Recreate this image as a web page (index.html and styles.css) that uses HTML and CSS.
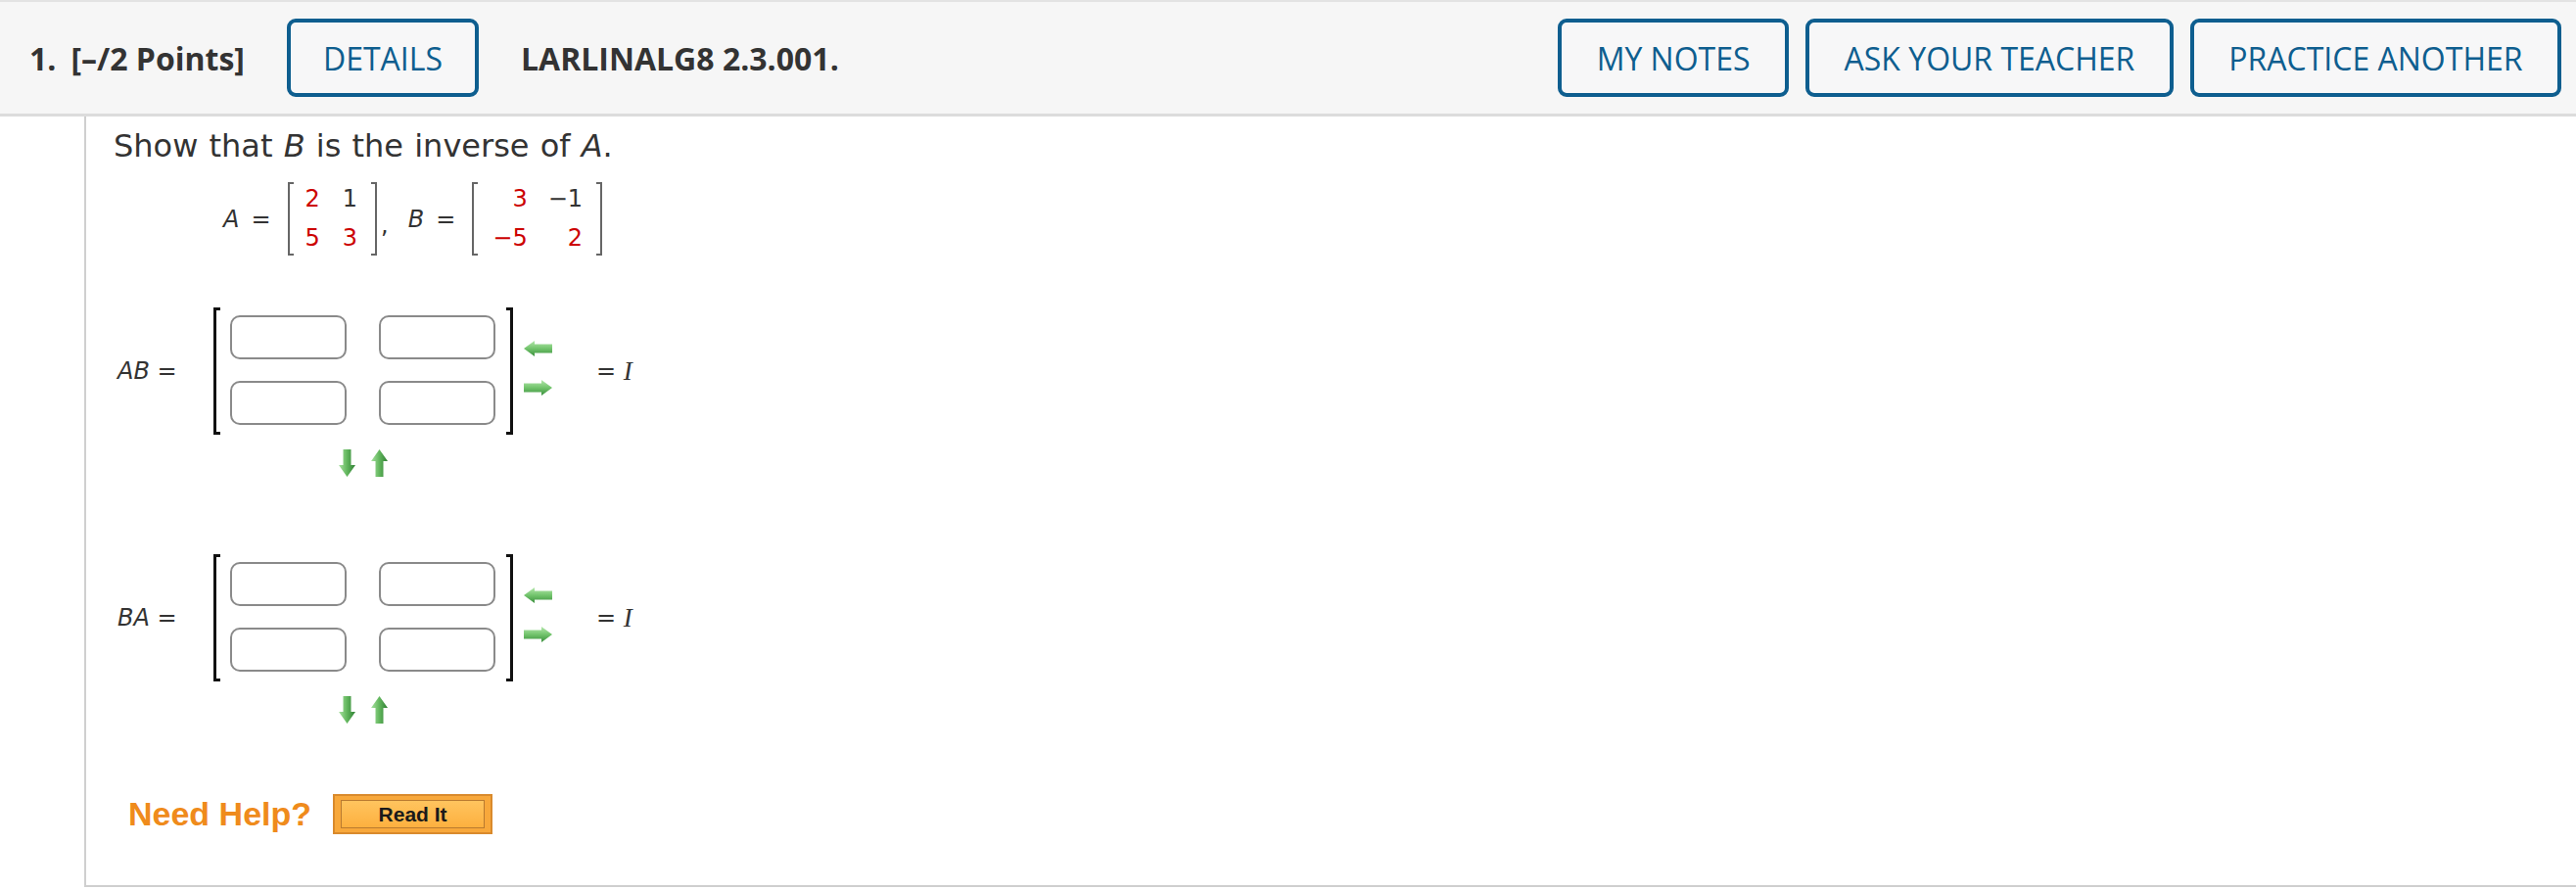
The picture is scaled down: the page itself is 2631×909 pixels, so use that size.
FILE: index.html
```html
<!DOCTYPE html>
<html>
<head>
<meta charset="utf-8">
<link rel="stylesheet" href="styles.css">
</head>
<body>
<svg class="defs" aria-hidden="true">
  <defs>
    <linearGradient id="gh" x1="0" y1="0" x2="0" y2="1">
      <stop offset="0" stop-color="#b5e8ad"/>
      <stop offset="0.5" stop-color="#72c46c"/>
      <stop offset="1" stop-color="#3a8f3d"/>
    </linearGradient>
    <linearGradient id="gv" x1="0" y1="0" x2="1" y2="0">
      <stop offset="0" stop-color="#a9e2a1"/>
      <stop offset="0.5" stop-color="#62b65d"/>
      <stop offset="1" stop-color="#2f7f33"/>
    </linearGradient>
  </defs>
</svg>

<div class="header">
  <span class="qnum">1.</span>
  <span class="points">[–/2 Points]</span>
  <button class="hbtn details">DETAILS</button>
  <span class="qid">LARLINALG8 2.3.001.</span>
  <div class="actions">
    <button class="hbtn wide">MY NOTES</button>
    <button class="hbtn wide">ASK YOUR TEACHER</button>
    <button class="hbtn wide">PRACTICE ANOTHER</button>
  </div>
</div>

<div class="content">
  <p class="prompt">Show that <i>B</i> is the inverse of <i>A</i>.</p>

  <div class="given">
    <span class="var">A</span><span class="eqs">=</span>
    <span class="smat">
      <span class="sbr l"></span>
      <span class="sgrid ga">
        <span class="red">2</span><span>1</span>
        <span class="red">5</span><span class="red">3</span>
      </span>
      <span class="sbr r"></span>
    </span>
    <span class="comma">,</span>
    <span class="var">B</span><span class="eqs">=</span>
    <span class="smat">
      <span class="sbr l"></span>
      <span class="sgrid gb">
        <span class="red">3</span><span>−1</span>
        <span class="red">−5</span><span class="red">2</span>
      </span>
      <span class="sbr r"></span>
    </span>
  </div>

  <div class="prod first">
    <span class="lbl"><i>AB</i>&nbsp;=</span>
    <div class="matcol">
      <div class="bigmat">
        <span class="bbr l"></span>
        <div class="bgrid">
          <span class="cell"></span><span class="cell"></span>
          <span class="cell"></span><span class="cell"></span>
        </div>
        <span class="bbr r"></span>
      </div>
      <div class="varrows">
        <svg width="17" height="28" viewBox="0 0 17 28"><polygon points="4.5,0 12.5,0 12.5,16 17,16 8.5,28 0,16 4.5,16" fill="url(#gv)"/></svg>
        <svg width="17" height="28" viewBox="0 0 17 28"><polygon points="8.5,0 17,12 12.5,12 12.5,28 4.5,28 4.5,12 0,12" fill="url(#gv)"/></svg>
      </div>
    </div>
    <div class="harrows">
      <svg width="29" height="16" viewBox="0 0 29 16"><polygon points="0,8 11,0 11,3.5 29,3.5 29,12.5 11,12.5 11,16" fill="url(#gh)"/></svg>
      <svg width="29" height="16" viewBox="0 0 29 16"><polygon points="29,8 18,0 18,3.5 0,3.5 0,12.5 18,12.5 18,16" fill="url(#gh)"/></svg>
    </div>
    <span class="eqI">=&nbsp;<span class="ivar">I</span></span>
  </div>

  <div class="prod second">
    <span class="lbl"><i>BA</i>&nbsp;=</span>
    <div class="matcol">
      <div class="bigmat">
        <span class="bbr l"></span>
        <div class="bgrid">
          <span class="cell"></span><span class="cell"></span>
          <span class="cell"></span><span class="cell"></span>
        </div>
        <span class="bbr r"></span>
      </div>
      <div class="varrows">
        <svg width="17" height="28" viewBox="0 0 17 28"><polygon points="4.5,0 12.5,0 12.5,16 17,16 8.5,28 0,16 4.5,16" fill="url(#gv)"/></svg>
        <svg width="17" height="28" viewBox="0 0 17 28"><polygon points="8.5,0 17,12 12.5,12 12.5,28 4.5,28 4.5,12 0,12" fill="url(#gv)"/></svg>
      </div>
    </div>
    <div class="harrows">
      <svg width="29" height="16" viewBox="0 0 29 16"><polygon points="0,8 11,0 11,3.5 29,3.5 29,12.5 11,12.5 11,16" fill="url(#gh)"/></svg>
      <svg width="29" height="16" viewBox="0 0 29 16"><polygon points="29,8 18,0 18,3.5 0,3.5 0,12.5 18,12.5 18,16" fill="url(#gh)"/></svg>
    </div>
    <span class="eqI">=&nbsp;<span class="ivar">I</span></span>
  </div>

  <div class="help">
    <span class="needhelp">Need Help?</span>
    <span class="readit"><span class="readit-in">Read It</span></span>
  </div>
</div>
</body>
</html>
```

FILE: styles.css
```css
html, body {
  margin: 0;
  padding: 0;
  background: #ffffff;
}

.defs {
  position: absolute;
  width: 0;
  height: 0;
  overflow: hidden;
}

/* ---------- header ---------- */
.header {
  display: flex;
  align-items: center;
  height: 119px;
  box-sizing: border-box;
  border-top: 2px solid #e3e3e3;
  border-bottom: 3px solid #dcdcdc;
  background: #f6f6f6;
  padding: 0 15px 0 30px;
  font-family: "Open Sans", sans-serif;
}

.qnum,
.points,
.qid {
  font-weight: 700;
  font-size: 32px;
  color: #333333;
}

.qnum {
  margin-right: 15px;
}

.points {
  margin-right: 43px;
}

.hbtn {
  height: 80px;
  box-sizing: border-box;
  border: 4px solid #0e5e8f;
  border-radius: 9px;
  background: #f7f7f8;
  color: #0e5e8f;
  font-family: "Open Sans", sans-serif;
  font-weight: 400;
  font-size: 32px;
  padding: 0 33px;
  margin: 0;
}

.hbtn.wide {
  padding: 0 35.5px;
}

.details {
  margin-right: 43px;
}

.actions {
  margin-left: auto;
  display: flex;
  gap: 17px;
}

/* ---------- content ---------- */
.content {
  margin-left: 86px;
  border-left: 2px solid #cfcfcf;
  border-bottom: 2px solid #cfcfcf;
  height: 787px;
  box-sizing: border-box;
  padding: 11px 0 0 28px;
  font-family: "DejaVu Sans", Verdana, sans-serif;
  color: #333333;
}

.prompt {
  margin: 0;
  font-size: 32px;
  line-height: 38px;
  word-spacing: 1px;
}

.given {
  display: flex;
  align-items: center;
  margin: 18px 0 0 112px;
  font-size: 24px;
}

.var {
  font-style: italic;
}

.eqs {
  margin: 0 17px 0 12px;
}

.smat {
  display: flex;
  align-items: stretch;
}

.sbr {
  width: 6px;
  box-sizing: border-box;
  border: 2px solid #666666;
}

.sbr.l {
  border-right: none;
}

.sbr.r {
  border-left: none;
}

.sgrid {
  display: grid;
  grid-template-columns: auto auto;
  row-gap: 10px;
  line-height: 30px;
  text-align: right;
}

.ga {
  column-gap: 23px;
  padding: 2px 14px 3px 12px;
}

.gb {
  column-gap: 21px;
  padding: 2px 14px 3px 15px;
}

.red {
  color: #cc0000;
}

.comma {
  margin: 0 20px 0 4px;
  position: relative;
  top: 6px;
}

/* ---------- product rows ---------- */
.prod {
  display: flex;
  align-items: flex-start;
  margin-left: 4px;
  font-size: 24px;
}

.prod.first {
  margin-top: 53px;
}

.prod.second {
  margin-top: 79px;
}

.lbl {
  width: 98px;
  height: 130px;
  display: flex;
  align-items: center;
}

.matcol {
  display: flex;
  flex-direction: column;
  align-items: center;
}

.bigmat {
  display: flex;
}

.bbr {
  width: 7px;
  box-sizing: border-box;
  border: 3px solid #111111;
}

.bbr.l {
  border-right: none;
}

.bbr.r {
  border-left: none;
}

.bgrid {
  display: grid;
  grid-template-columns: 119px 119px;
  grid-auto-rows: 45px;
  column-gap: 33px;
  row-gap: 22px;
  padding: 8px 11px 10px 10px;
}

.cell {
  border: 2px solid #8a8a8a;
  border-radius: 10px;
  box-sizing: border-box;
  background: #ffffff;
}

.varrows {
  display: flex;
  gap: 16px;
  margin-top: 15px;
  height: 28px;
}

.harrows {
  height: 130px;
  box-sizing: border-box;
  padding-bottom: 6px;
  display: flex;
  flex-direction: column;
  justify-content: center;
  gap: 24px;
  margin-left: 11px;
}

.harrows svg,
.varrows svg {
  display: block;
}

.eqI {
  height: 130px;
  display: flex;
  align-items: center;
  margin-left: 45px;
}

.ivar {
  font-family: "Liberation Serif", serif;
  font-style: italic;
  font-size: 27px;
}

/* ---------- help ---------- */
.help {
  display: flex;
  align-items: center;
  margin: 72px 0 0 15px;
}

.needhelp {
  font-family: "Liberation Sans", Arial, sans-serif;
  font-weight: 700;
  font-size: 34px;
  color: #ef8b1c;
}

.readit {
  display: flex;
  width: 163px;
  height: 41px;
  box-sizing: border-box;
  margin-left: 22px;
  border: 2px solid #d98a2c;
  background: #f8a83b;
  padding: 4px 6px;
}

.readit-in {
  flex: 1;
  display: flex;
  align-items: center;
  justify-content: center;
  border: 1px solid #b97a2f;
  background: linear-gradient(#ffc45e, #fdb03f);
  font-family: "Liberation Sans", Arial, sans-serif;
  font-weight: 700;
  font-size: 21px;
  color: #1a1a1a;
}
```
